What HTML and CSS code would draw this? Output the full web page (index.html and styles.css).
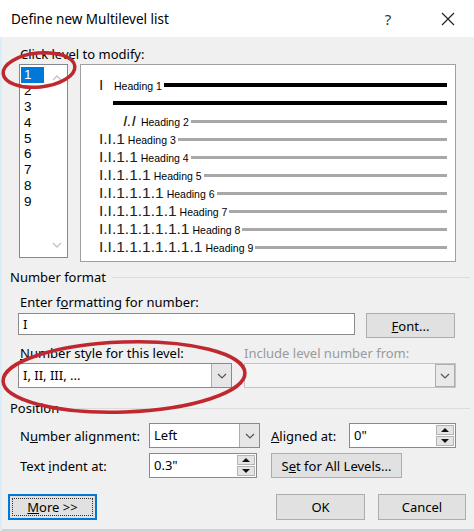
FILE: index.html
```html
<!DOCTYPE html>
<html lang="en">
<head>
    <meta charset="UTF-8">
    <title>Define new Multilevel list</title>
    <link rel="stylesheet" href="styles.css">
</head>
<body>
<div class="dialog">
    <div class="titlebar">
        <span class="title">Define new Multilevel list</span>
        <span class="help">?</span>
        <svg class="close" width="14" height="14" viewBox="0 0 14 14">
            <path d="M1 1L13 13M13 1L1 13" stroke="#222" stroke-width="1.2" fill="none"/>
        </svg>
    </div>

    <div class="caption">Click level to modify:</div>

    <div class="levels">
        <div class="level-list">
            <ul>
                <li class="selected">1</li>
                <li>2</li>
                <li>3</li>
                <li>4</li>
                <li>5</li>
                <li>6</li>
                <li>7</li>
                <li>8</li>
                <li>9</li>
            </ul>
            <div class="scroll">
                <svg width="10" height="6" viewBox="0 0 10 6"><path d="M1 5L5 1L9 5" stroke="#c4c4c4" stroke-width="1.3" fill="none"/></svg>
                <svg width="10" height="6" viewBox="0 0 10 6"><path d="M1 1L5 5L9 1" stroke="#c4c4c4" stroke-width="1.3" fill="none"/></svg>
            </div>
        </div>

        <!-- preview of all nine levels -->
        <div class="preview">
            <div class="row"><span class="num first">I</span><span class="name">Heading 1</span><span class="rule dark"></span></div>
            <div class="row wrap"><span class="rule dark"></span></div>
            <div class="row lvl2"><span class="num italic">I.I</span><span class="name">Heading 2</span><span class="rule"></span></div>
            <div class="row"><span class="num">I.I.1</span><span class="name">Heading 3</span><span class="rule"></span></div>
            <div class="row"><span class="num">I.I.1.1</span><span class="name">Heading 4</span><span class="rule"></span></div>
            <div class="row"><span class="num">I.I.1.1.1</span><span class="name">Heading 5</span><span class="rule"></span></div>
            <div class="row"><span class="num">I.I.1.1.1.1</span><span class="name">Heading 6</span><span class="rule"></span></div>
            <div class="row"><span class="num">I.I.1.1.1.1.1</span><span class="name">Heading 7</span><span class="rule"></span></div>
            <div class="row"><span class="num">I.I.1.1.1.1.1.1</span><span class="name">Heading 8</span><span class="rule"></span></div>
            <div class="row"><span class="num">I.I.1.1.1.1.1.1.1</span><span class="name">Heading 9</span><span class="rule"></span></div>
        </div>
    </div>

    <div class="group">Number format</div>

    <div class="field-label">Enter f<u>o</u>rmatting for number:</div>
    <div class="format-row">
        <div class="textbox">I</div>
        <button class="btn font-btn"><u>F</u>ont...</button>
    </div>

    <div class="style-grid">
        <div class="field-label"><u>N</u>umber style for this level:</div>
        <div class="field-label disabled">Include level number from:</div>
        <div class="select">
            <span class="value">I, II, III, ...</span>
            <span class="arrow"><svg width="10" height="6" viewBox="0 0 10 6"><path d="M1 1L5 5L9 1" stroke="#555" stroke-width="1.2" fill="none"/></svg></span>
        </div>
        <div class="select off">
            <span class="value"></span>
            <span class="arrow"><svg width="10" height="6" viewBox="0 0 10 6"><path d="M1 1L5 5L9 1" stroke="#555" stroke-width="1.2" fill="none"/></svg></span>
        </div>
    </div>

    <div class="group pos">Position</div>

    <div class="pos-grid">
        <div class="field-label">N<u>u</u>mber alignment:</div>
        <div class="select small">
            <span class="value">Left</span>
            <span class="arrow"><svg width="10" height="6" viewBox="0 0 10 6"><path d="M1 1L5 5L9 1" stroke="#555" stroke-width="1.2" fill="none"/></svg></span>
        </div>
        <div class="field-label"><u>A</u>ligned at:</div>
        <div class="spin">
            <span class="value">0"</span>
            <span class="spin-btns"><span class="up"></span><span class="down"></span></span>
        </div>

        <div class="field-label">Text <u>i</u>ndent at:</div>
        <div class="spin narrow">
            <span class="value">0.3"</span>
            <span class="spin-btns"><span class="up"></span><span class="down"></span></span>
        </div>
        <button class="btn all-levels">S<u>e</u>t for All Levels...</button>
    </div>

    <div class="footer">
        <button class="btn default"><span class="focus"><u>M</u>ore &gt;&gt;</span></button>
        <button class="btn ok">OK</button>
        <button class="btn">Cancel</button>
    </div>

    <!-- red marks drawn over the dialog -->
    <svg class="marks" width="474" height="531" viewBox="0 0 474 531">
        <ellipse cx="39" cy="70" rx="36" ry="17" transform="rotate(-6 39 70)"/>
        <ellipse cx="124" cy="377" rx="121" ry="35" transform="rotate(-2 124 377)"/>
    </svg>
</div>
</body>
</html>
```

FILE: styles.css
```css
* {
    box-sizing: border-box;
}

body {
    margin: 0;
    background: #ffffff;
    font-family: "Noto Sans", sans-serif;
    font-size: 13px;
    color: #000;
}

.dialog {
    position: relative;
    width: 474px;
    height: 531px;
    background: #f0f0f0;
    overflow: hidden;
    box-shadow: inset 2px 0 0 #d9eef9, inset 0 -2px 0 #c9d3da;
}

/* title bar */
.titlebar {
    display: flex;
    align-items: center;
    height: 37px;
    padding-left: 11px;
    background: #ffffff;
}

.title {
    flex: 1;
    font-size: 13.5px;
}

.help {
    width: 14px;
    margin-right: 46px;
    text-align: center;
    font-size: 15px;
    color: #333;
}

.close {
    margin-right: 19px;
}

.caption {
    margin: 8px 0 1px 20px;
    line-height: 18px;
}

/* level picker + preview */
.levels {
    display: flex;
    align-items: flex-start;
    gap: 12px;
    margin-left: 19px;
    height: 198px;
}

.level-list {
    display: flex;
    width: 49px;
    height: 194px;
    background: #fff;
    border: 1px solid #828790;
}

.level-list ul {
    flex: 1;
    list-style: none;
    margin: 0;
    padding: 2px 0 0 1px;
}

.level-list li {
    height: 15.9px;
    line-height: 15.9px;
    padding-left: 3px;
    font-family: "Liberation Sans", Arial, sans-serif;
    font-size: 13.5px;
}

.level-list li.selected {
    width: 23px;
    background: #0078d7;
    color: #fff;
}

.scroll {
    width: 21px;
    display: flex;
    flex-direction: column;
    justify-content: space-between;
    align-items: center;
    padding: 10px 0 9px;
}

.preview {
    width: 376px;
    height: 198px;
    background: #fff;
    border: 1px solid #a0a0a0;
    padding: 11px 8px 0 18px;
}

.row {
    display: flex;
    align-items: center;
    height: 18px;
}

.row.wrap {
    padding-left: 14px;
}

.row.lvl2 {
    padding-left: 24px;
}

.num {
    font-family: "Liberation Sans", Arial, sans-serif;
    font-size: 15.5px;
    margin-right: 3px;
    color: #222;
}

.num.first {
    width: 15px;
    margin-right: 0;
}

.num.italic {
    font-style: italic;
    margin-right: 5px;
}

.name {
    font-family: "Liberation Sans", Arial, sans-serif;
    font-size: 10.5px;
    margin-right: 2px;
    padding-top: 2px;
}

.rule {
    flex: 1;
    height: 3px;
    background: #a8a8a8;
}

.rule.dark {
    height: 4px;
    background: #000;
}

/* group headings with a rule after them */
.group {
    display: flex;
    align-items: center;
    gap: 6px;
    margin: 6px 4px 0 10px;
    line-height: 18px;
}

.group::after {
    content: "";
    flex: 1;
    height: 1px;
    background: #dcdcdc;
}

.group.pos {
    margin-top: 11px;
}

.field-label {
    line-height: 18px;
}

.group + .field-label {
    margin: 7px 0 2px 20px;
}

.field-label.disabled {
    color: #9a9a9a;
}

.format-row {
    display: flex;
    align-items: flex-start;
    gap: 11px;
    margin-left: 18px;
}

.textbox {
    width: 337px;
    height: 22px;
    line-height: 20px;
    padding-left: 4px;
    background: #fff;
    border: 1px solid #8a8a8a;
}

.btn {
    height: 26px;
    padding: 0;
    background: #e1e1e1;
    border: 1px solid #adadad;
    font-family: "Noto Sans", sans-serif;
    font-size: 13px;
    color: #000;
}

.font-btn {
    width: 89px;
    height: 25px;
}

.style-grid {
    display: grid;
    grid-template-columns: 214px 212px;
    column-gap: 12px;
    row-gap: 1px;
    margin: 6px 0 0 18px;
}

.style-grid .field-label {
    padding-left: 2px;
}

.style-grid .field-label.disabled {
    padding-left: 0;
}

/* drop-down boxes */
.select {
    display: flex;
    height: 25px;
    background: #fff;
    border: 1px solid #8a8a8a;
}

.select .value {
    flex: 1;
    padding-left: 4px;
    line-height: 23px;
}

.select .arrow {
    width: 20px;
    display: flex;
    align-items: center;
    justify-content: center;
    background: #e6e6e6;
    border-left: 1px solid #adadad;
}

.select.off {
    background: #f4f4f4;
    border-color: #c4c4c4;
}

.select.off .arrow {
    background: #e9e9e9;
    border: 1px solid #adadad;
}

.pos-grid {
    display: grid;
    grid-template-columns: 129px 122px 78px 107px;
    grid-template-rows: 25px 25px;
    row-gap: 5px;
    align-items: center;
    margin: 6px 0 0 20px;
}

.select.small {
    width: 111px;
}

.spin {
    display: flex;
    height: 25px;
    background: #fff;
    border: 1px solid #8a8a8a;
}

.spin.narrow {
    width: 108px;
}

.spin .value {
    flex: 1;
    padding-left: 4px;
    line-height: 23px;
}

.spin-btns {
    width: 19px;
    display: flex;
    flex-direction: column;
    gap: 1px;
    padding: 1px 1px 1px 0;
}

.spin-btns span {
    flex: 1;
    position: relative;
    background: #e4e4e4;
    border: 1px solid #b4b4b4;
}

.spin-btns span::after {
    content: "";
    position: absolute;
    left: 50%;
    top: 50%;
    margin: -2px 0 0 -4px;
    border-left: 4px solid transparent;
    border-right: 4px solid transparent;
}

.spin-btns .up::after {
    border-bottom: 4px solid #111;
}

.spin-btns .down::after {
    border-top: 4px solid #111;
}

.all-levels {
    grid-column: 3 / span 2;
    width: 131px;
    height: 25px;
}

.footer {
    display: flex;
    gap: 13px;
    margin: 16px 0 0 8px;
}

.footer .btn {
    width: 89px;
}

.footer .ok {
    margin-left: auto;
}

.footer .btn:last-child {
    width: 88px;
    margin-right: 8px;
}

.btn.default {
    padding: 2px;
    border: 2px solid #0078d7;
}

.btn.default .focus {
    display: block;
    height: 100%;
    line-height: 16px;
    border: 1px dotted #333;
}

.marks {
    position: absolute;
    top: 0;
    left: 0;
    pointer-events: none;
}

.marks ellipse {
    fill: none;
    stroke: #c0282f;
    stroke-width: 3.5;
}
```
